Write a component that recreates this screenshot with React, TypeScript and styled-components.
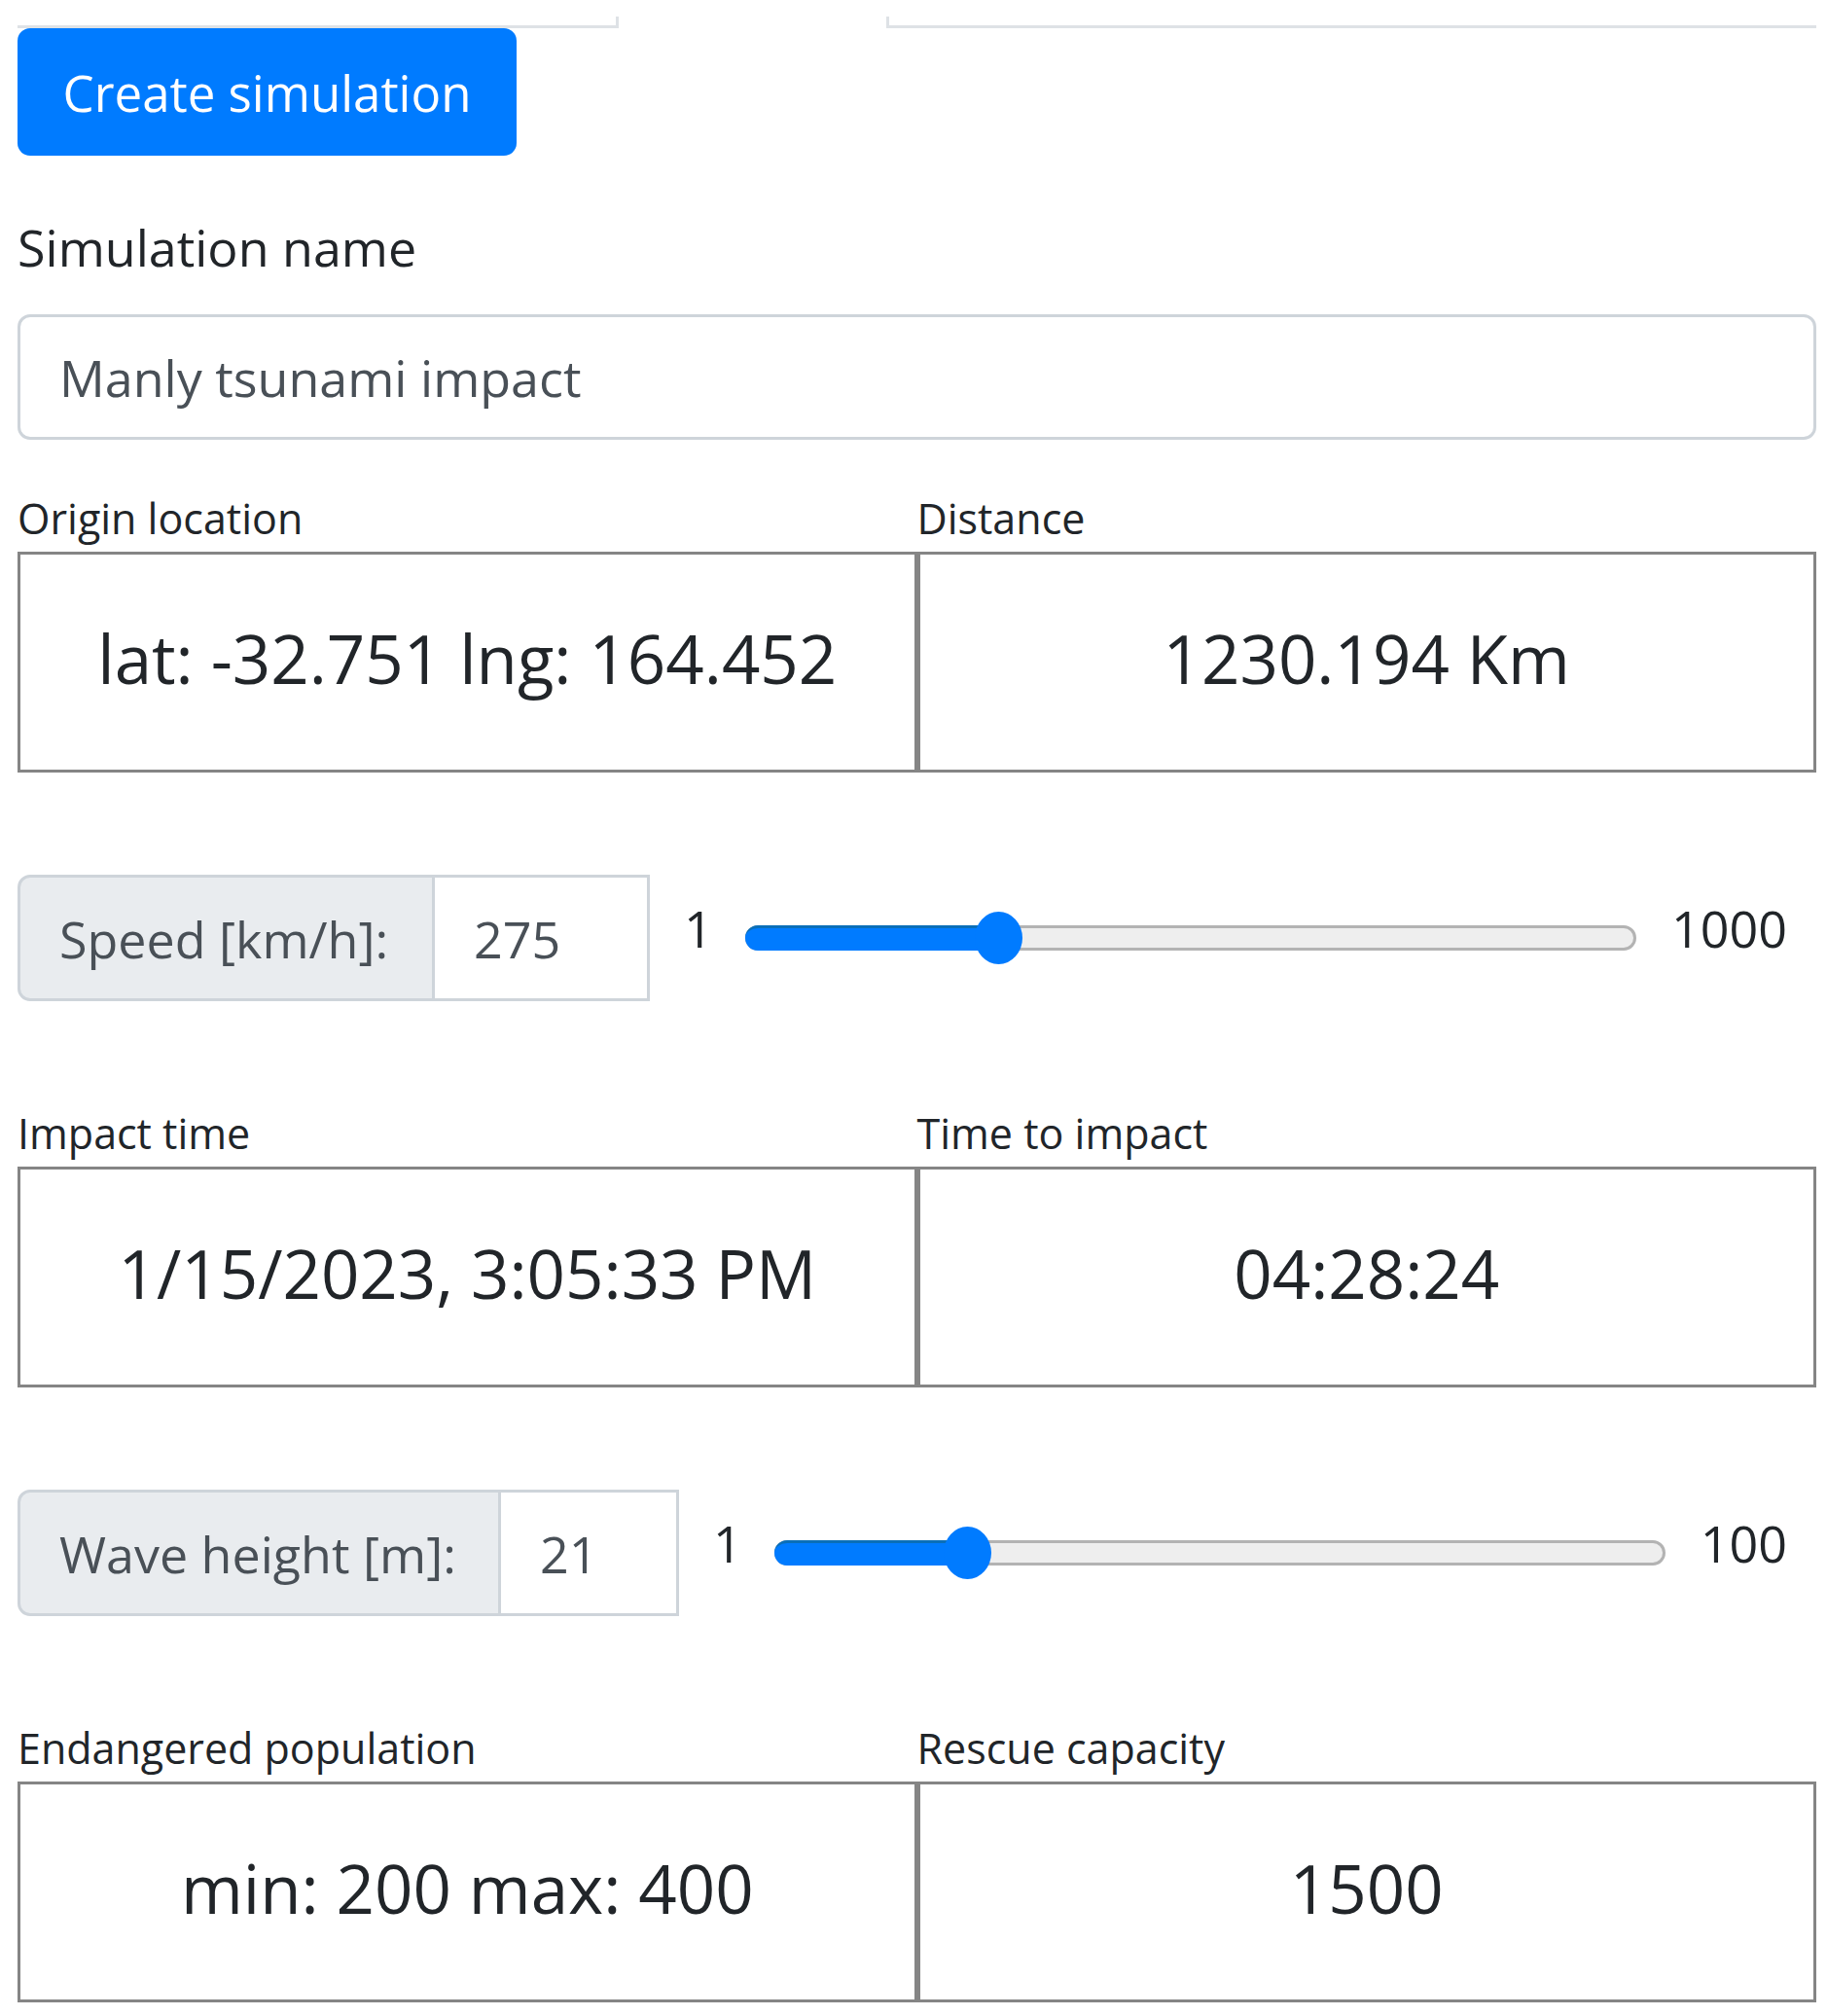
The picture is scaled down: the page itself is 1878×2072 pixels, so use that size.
import React from 'react';
import styled, { createGlobalStyle } from 'styled-components';

const GlobalStyle = createGlobalStyle`
    html, body {
        margin: 0;
        padding: 0;
        background: #ffffff;
    }
    body {
        font-family: "Open Sans", "Liberation Sans", sans-serif;
        color: #212529;
    }
    * {
        box-sizing: border-box;
    }
`;

const Page = styled.div`
    padding: 0 11px 15px 18px;
`;

const TabStrip = styled.div`
    display: flex;
    align-items: flex-end;
    height: 29px;
`;

const TabLine = styled.div<{ $width?: number }>`
    ${p => (p.$width ? `width: ${p.$width}px;` : 'flex: 1;')}
    border-bottom: 3px solid #dee2e6;
`;

const ActiveTabEdge = styled.div`
    width: 281px;
    height: 12px;
    border-left: 3px solid #dee2e6;
    border-right: 3px solid #dee2e6;
`;

const CreateButton = styled.button`
    display: flex;
    align-items: center;
    justify-content: center;
    width: 513px;
    height: 131px;
    padding: 0;
    border: none;
    border-radius: 13px;
    background: #007bff;
    color: #ffffff;
    font-family: inherit;
    font-size: 51px;
    cursor: pointer;
`;

const FieldLabel = styled.label`
    display: block;
    margin: 53px 0 29px;
    font-size: 52px;
    line-height: 81px;
`;

const TextInput = styled.input`
    display: block;
    width: 100%;
    height: 129px;
    padding: 0 40px;
    border: 3px solid #ced4da;
    border-radius: 13px;
    font-family: inherit;
    font-size: 52px;
    color: #495057;
    outline: none;
`;

const PairGrid = styled.div<{ $top: number }>`
    display: grid;
    grid-template-columns: 1fr 1fr;
    margin-top: ${p => p.$top}px;
`;

const PairCell = styled.div`
    display: flex;
    flex-direction: column;
`;

const PairLabel = styled.div`
    font-size: 43px;
    line-height: 68px;
    white-space: nowrap;
`;

const ValueBox = styled.div`
    display: flex;
    align-items: center;
    justify-content: center;
    height: 227px;
    padding-bottom: 10px;
    border: 3px solid #858585;
    font-size: 69px;
    white-space: nowrap;
`;

const SliderRow = styled.div`
    display: flex;
    align-items: center;
    height: 130px;
    margin: 105px 0 102px;
`;

const InputGroup = styled.div`
    display: flex;
    height: 130px;
`;

const GroupLabel = styled.span<{ $width: number }>`
    display: flex;
    align-items: center;
    width: ${p => p.$width}px;
    padding: 0 40px;
    background: #e9ecef;
    border: 3px solid #ced4da;
    border-radius: 13px 0 0 13px;
    font-size: 52px;
    color: #495057;
    white-space: nowrap;
`;

const GroupValue = styled.input<{ $width: number }>`
    width: ${p => p.$width}px;
    height: 100%;
    padding: 0 40px;
    border: 3px solid #ced4da;
    border-left: none;
    border-radius: 0;
    font-family: inherit;
    font-size: 52px;
    color: #495057;
    outline: none;
`;

const RangeBox = styled.div`
    flex: 1;
    display: flex;
    align-items: center;
    margin-left: 35px;
    padding-right: 30px;
`;

const RangeEnd = styled.span`
    font-size: 52px;
    line-height: 1;
    margin-bottom: 20px;
`;

const Track = styled.div`
    position: relative;
    flex: 1;
    height: 26px;
    margin: 0 36px 0 33px;
    border: 3px solid #b3b3b3;
    border-radius: 13px;
    background: #eeeeee;
`;

const TrackFill = styled.div`
    position: absolute;
    left: -3px;
    top: -3px;
    bottom: -3px;
    background: #007bff;
    border-top: 3px solid #0a6fb8;
    border-radius: 13px 0 0 13px;
`;

const Thumb = styled.div`
    position: absolute;
    top: 50%;
    width: 49px;
    height: 54px;
    margin-left: -3px;
    transform: translateY(-50%);
    border-radius: 50%;
    background: #007bff;
`;

interface Pair {
    label: string;
    value: string;
}

interface SliderSpec {
    label: string;
    value: number;
    min: number;
    max: number;
    labelWidth: number;
    valueWidth: number;
}

interface Section {
    pairs: [Pair, Pair];
    slider?: SliderSpec;
}

const sections: Section[] = [
    {
        pairs: [
            { label: 'Origin location', value: 'lat: -32.751 lng: 164.452' },
            { label: 'Distance', value: '1230.194 Km' },
        ],
        slider: { label: 'Speed [km/h]:', value: 275, min: 1, max: 1000, labelWidth: 429, valueWidth: 221 },
    },
    {
        pairs: [
            { label: 'Impact time', value: '1/15/2023, 3:05:33 PM' },
            { label: 'Time to impact', value: '04:28:24' },
        ],
        slider: { label: 'Wave height [m]:', value: 21, min: 1, max: 100, labelWidth: 497, valueWidth: 183 },
    },
    {
        pairs: [
            { label: 'Endangered population', value: 'min: 200 max: 400' },
            { label: 'Rescue capacity', value: '1500' },
        ],
    },
];

const RangeSlider: React.FC<SliderSpec> = ({ label, value, min, max, labelWidth, valueWidth }) => {
    const frac = (value - min) / (max - min);
    return (
        <SliderRow>
            <InputGroup>
                <GroupLabel $width={labelWidth}>{label}</GroupLabel>
                <GroupValue $width={valueWidth} value={String(value)} readOnly />
            </InputGroup>
            <RangeBox>
                <RangeEnd>{min}</RangeEnd>
                <Track>
                    <TrackFill style={{ width: `calc(${frac} * (100% - 49px) + 27px)` }} />
                    <Thumb style={{ left: `calc(${frac} * (100% - 49px))` }} />
                </Track>
                <RangeEnd>{max}</RangeEnd>
            </RangeBox>
        </SliderRow>
    );
};

export default function App() {
    return (
        <>
            <GlobalStyle />
            <Page>
                <TabStrip>
                    <TabLine $width={615} />
                    <ActiveTabEdge />
                    <TabLine />
                </TabStrip>
                <CreateButton>Create simulation</CreateButton>
                <FieldLabel>Simulation name</FieldLabel>
                <TextInput defaultValue="Manly tsunami impact" />
                {sections.map((s, i) => (
                    <React.Fragment key={i}>
                        <PairGrid $top={i === 0 ? 47 : 0}>
                            {s.pairs.map(p => (
                                <PairCell key={p.label}>
                                    <PairLabel>{p.label}</PairLabel>
                                    <ValueBox>{p.value}</ValueBox>
                                </PairCell>
                            ))}
                        </PairGrid>
                        {s.slider && <RangeSlider {...s.slider} />}
                    </React.Fragment>
                ))}
            </Page>
        </>
    );
}
